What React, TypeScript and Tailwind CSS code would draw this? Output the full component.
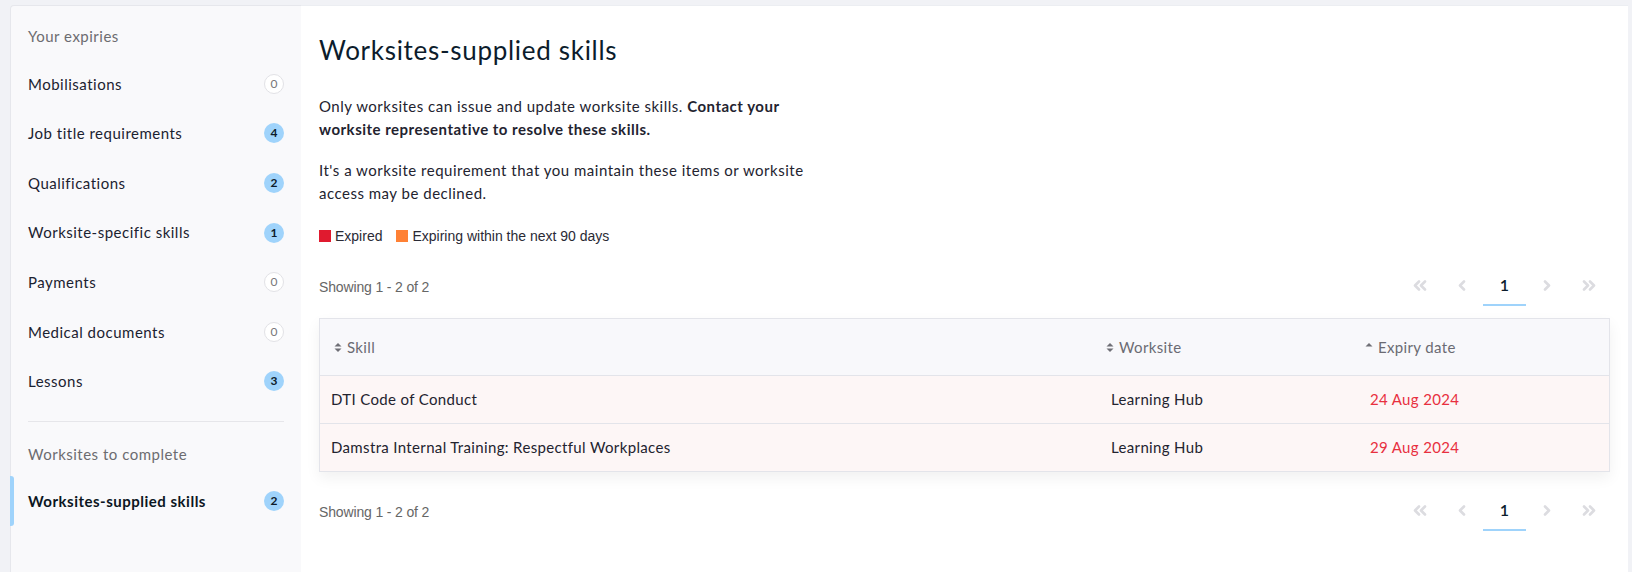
import React from "react";

const expiries = [
  { label: "Mobilisations", count: 0 },
  { label: "Job title requirements", count: 4 },
  { label: "Qualifications", count: 2 },
  { label: "Worksite-specific skills", count: 1 },
  { label: "Payments", count: 0 },
  { label: "Medical documents", count: 0 },
  { label: "Lessons", count: 3 },
];

const skills = [
  { skill: "DTI Code of Conduct", worksite: "Learning Hub", expiry: "24 Aug 2024" },
  { skill: "Damstra Internal Training: Respectful Workplaces", worksite: "Learning Hub", expiry: "29 Aug 2024" },
];

function Badge({ count }: { count: number }) {
  if (count === 0) {
    return (
      <span className="flex h-[20px] w-[20px] items-center justify-center rounded-full border border-[#e2e2e6] bg-white text-[12px] tracking-normal text-[#777]">
        0
      </span>
    );
  }
  return (
    <span className="flex h-[20px] w-[20px] items-center justify-center rounded-full bg-[#9fd3fb] text-[12px] font-bold tracking-normal text-[#0d1b2a]">
      {count}
    </span>
  );
}

function SortIcon({ upOnly }: { upOnly?: boolean }) {
  return (
    <svg width="8" height="11" viewBox="0 0 8 11" className="shrink-0">
      <path d="M0.5 4.5 L4 1 L7.5 4.5 Z" fill="#6f6f76" />
      {!upOnly && <path d="M0.5 6.5 L4 10 L7.5 6.5 Z" fill="#6f6f76" />}
    </svg>
  );
}

function Chevron({ dir, double }: { dir: "left" | "right"; double?: boolean }) {
  const w = double ? 14 : 8;
  return (
    <svg width={w} height="11" viewBox={`0 0 ${w} 11`}>
      <g
        transform={dir === "right" ? `scale(-1,1) translate(-${w},0)` : undefined}
        fill="none"
        stroke="#dcdce0"
        strokeWidth="2.6"
        strokeLinecap="round"
        strokeLinejoin="round"
      >
        <polyline points="6,1.5 2,5.5 6,9.5" />
        {double && <polyline points="12,1.5 8,5.5 12,9.5" />}
      </g>
    </svg>
  );
}

function Pager() {
  return (
    <div className="flex">
      <span className="flex h-[41px] w-[42px] items-center justify-center">
        <Chevron dir="left" double />
      </span>
      <span className="flex h-[41px] w-[42px] items-center justify-center">
        <Chevron dir="left" />
      </span>
      <span className="flex h-[41px] w-[43px] items-center justify-center border-b-2 border-[#9fd3fb] pt-[1px] text-[16px] font-semibold text-[#0c1c2c]">
        1
      </span>
      <span className="flex h-[41px] w-[42px] items-center justify-center">
        <Chevron dir="right" />
      </span>
      <span className="flex h-[41px] w-[42px] items-center justify-center">
        <Chevron dir="right" double />
      </span>
    </div>
  );
}

function PagerRow() {
  return (
    <div className="flex items-center justify-between">
      <span className="pt-[3px] font-['Liberation_Sans',Arial,sans-serif] text-[14px] tracking-[-0.15px] text-[#666]">
        Showing 1 - 2 of 2
      </span>
      <Pager />
    </div>
  );
}

export default function App() {
  return (
    <div className="min-h-screen bg-[#f1f2f6] pt-[5px] pl-[10px] pr-[4px] font-['Lato','Open_Sans',sans-serif]">
      <div className="flex h-[567px]">
        {/* Sidebar */}
        <aside className="w-[291px] shrink-0 rounded-tl-[4px] border-l border-t border-[#e6e7ec] bg-[#f9f9fb] px-[17px] pt-[17px] tracking-[0.5px]">
          <div className="h-[36px] pt-[3px] text-[15px] leading-[20px] text-[#6c6c70]">Your expiries</div>
          {expiries.map((e) => (
            <div key={e.label} className="flex h-[49.6px] items-center justify-between text-[15px] text-[#1b2230]">
              <span>{e.label}</span>
              <Badge count={e.count} />
            </div>
          ))}
          <div className="mt-[15px] border-t border-[#e6e6ea]" />
          <div className="pt-[22px] pb-[12px] text-[15px] leading-[20px] text-[#6c6c70]">Worksites to complete</div>
          <div className="relative flex h-[49.6px] items-center justify-between text-[15px] font-bold text-[#0c1622]">
            <span className="absolute -left-[18px] top-0 h-full w-[4px] rounded-r-[3px] bg-[#9fd3fb]" />
            <span>Worksites-supplied skills</span>
            <Badge count={2} />
          </div>
        </aside>

        {/* Main */}
        <main className="flex-1 border-t border-[#eceef2] bg-white pl-[18px] pr-[18px] pt-[28px]">
          <h1 className="text-[26px] leading-[32px] tracking-[0.7px] text-[#0c1c2c]">Worksites-supplied skills</h1>

          <div className="mt-[29px] max-w-[490px] text-[15px] leading-[23px] tracking-[0.5px] text-[#23232f]">
            <p>
              Only worksites can issue and update worksite skills.{" "}
              <span className="font-bold">Contact your worksite representative to resolve these skills.</span>
            </p>
            <p className="mt-[18px]">
              It's a worksite requirement that you maintain these items or worksite access may be declined.
            </p>
          </div>

          <div className="mt-[21px] flex items-center font-['Liberation_Sans',Arial,sans-serif] text-[14px] leading-[20px] text-[#2a2a35]">
            <span className="mr-[4px] h-[12px] w-[12px] bg-[#e01a2f]" />
            <span className="mr-[14px]">Expired</span>
            <span className="mr-[4px] h-[12px] w-[12px] bg-[#ff8135]" />
            <span>Expiring within the next 90 days</span>
          </div>

          <div className="mt-[19px]">
            <PagerRow />
          </div>

          {/* Table */}
          <div className="mt-[12px] border border-[#e3e4ea] tracking-[0.35px] shadow-[0_6px_14px_rgba(0,0,0,0.06)]">
            <div className="grid h-[57px] grid-cols-[779px_259px_1fr] items-center border-b border-[#e3e4ea] bg-[#f8f8fb] text-[15px] text-[#6b6b73]">
              <div className="flex items-center gap-[5px] pl-[14px]">
                <SortIcon />
                <span>Skill</span>
              </div>
              <div className="flex items-center gap-[5px] pl-[7px]">
                <SortIcon />
                <span>Worksite</span>
              </div>
              <div className="flex items-center gap-[5px] pl-[7px]">
                <SortIcon upOnly />
                <span>Expiry date</span>
              </div>
            </div>
            {skills.map((s, i) => (
              <div
                key={s.skill}
                className={`grid h-[47.5px] grid-cols-[779px_259px_1fr] items-center bg-[#fdf6f6] text-[15px] text-[#23232f] ${
                  i < skills.length - 1 ? "border-b border-[#e3e4ea]" : ""
                }`}
              >
                <div className="pl-[11px]">{s.skill}</div>
                <div className="pl-[12px]">{s.worksite}</div>
                <div className="pl-[12px] text-[#e8303f]">{s.expiry}</div>
              </div>
            ))}
          </div>

          <div className="mt-[18px]">
            <PagerRow />
          </div>
        </main>
      </div>
    </div>
  );
}
